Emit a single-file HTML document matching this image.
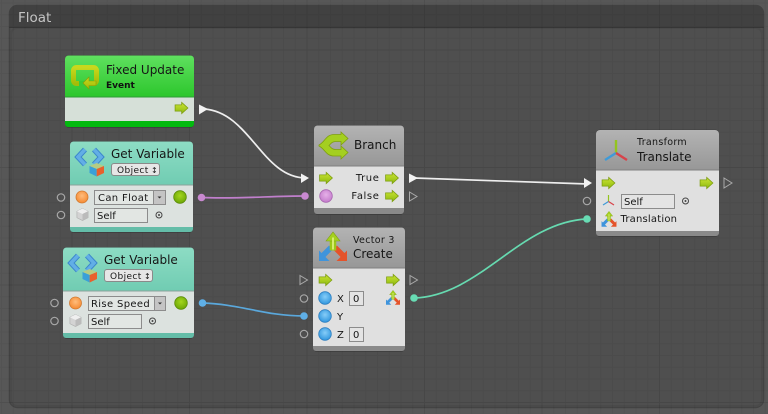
<!DOCTYPE html>
<html><head><meta charset="utf-8"><style>
html,body{margin:0;padding:0;background:#575757;width:768px;height:414px;overflow:hidden}
svg{display:block;filter:blur(.3px)}
text{font-family:"DejaVu Sans","Liberation Sans",sans-serif;fill:#161616}
</style></head><body>
<svg width="768" height="414" viewBox="0 0 768 414" xmlns="http://www.w3.org/2000/svg">
<defs>
<pattern id="g" width="11.75" height="11.75" patternUnits="userSpaceOnUse" x="1" y="2.500"><path d="M.5 0V11.750M0 .5H11.750" stroke="#000" stroke-opacity=".05" fill="none"/></pattern>
<pattern id="G" width="117.5" height="117.5" patternUnits="userSpaceOnUse" x="71.500" y="49.500"><path d="M.5 0V117.500M0 .5H117.500" stroke="#000" stroke-opacity=".05" fill="none"/></pattern>
<linearGradient id="hg" x1="0" y1="0" x2="0" y2="1"><stop offset="0" stop-color="#5fe05f"/><stop offset="1" stop-color="#2cc62c"/></linearGradient>
<linearGradient id="ht" x1="0" y1="0" x2="0" y2="1"><stop offset="0" stop-color="#8ddcc4"/><stop offset="1" stop-color="#70ccb2"/></linearGradient>
<linearGradient id="hs" x1="0" y1="0" x2="0" y2="1"><stop offset="0" stop-color="#b3b3b3"/><stop offset="1" stop-color="#979797"/></linearGradient>
<linearGradient id="ag" x1="0" y1="0" x2="0" y2="1"><stop offset="0" stop-color="#cde636"/><stop offset="1" stop-color="#8cb80e"/></linearGradient>
<linearGradient id="ly" x1="0" y1="0" x2="0" y2="1"><stop offset="0" stop-color="#c8d81c"/><stop offset="1" stop-color="#a4bc08"/></linearGradient>
<radialGradient id="po" cx=".5" cy=".4" r=".6"><stop offset="0" stop-color="#ffbd7c"/><stop offset="1" stop-color="#f58a32"/></radialGradient>
<radialGradient id="pg" cx=".5" cy=".4" r=".6"><stop offset="0" stop-color="#a4d61e"/><stop offset="1" stop-color="#6da706"/></radialGradient>
<radialGradient id="pb" cx=".5" cy=".4" r=".6"><stop offset="0" stop-color="#86cdf8"/><stop offset="1" stop-color="#3096de"/></radialGradient>
<radialGradient id="pp" cx=".5" cy=".4" r=".6"><stop offset="0" stop-color="#e6b0e8"/><stop offset="1" stop-color="#c47ccc"/></radialGradient>
<symbol id="arr" viewBox="0 0 14 12" overflow="visible"><path d="M.6 2.900H7.200V.4L13.400 6 7.200 11.600V9.100H.6Z" fill="url(#ag)" stroke="#7f9f10" stroke-width=".8"/></symbol>
<symbol id="cube" viewBox="0 0 14 14" overflow="visible"><path d="M7 .5 13 3.500V10.500L7 13.500 1 10.500V3.500Z" fill="#d3d3d3" stroke="#aaa" stroke-width=".6"/><path d="M1 3.500 7 6.500 13 3.500 7 .5Z" fill="#efefef"/><path d="M7 6.500V13.500L13 10.500V3.500Z" fill="#bbb"/></symbol>
<symbol id="vec" viewBox="0 0 30 30" overflow="visible">
<path d="M13 16 5 24" stroke="#3f94dc" stroke-width="5.500" fill="none"/><path d="M1 19V29.500H11.500Z" fill="#3f94dc"/>
<path d="M17 16 25 24" stroke="#e5532a" stroke-width="5.500" fill="none"/><path d="M29 19V29.500H18.500Z" fill="#e5532a"/>
<path d="M15 19V7" stroke="#9cc81a" stroke-width="6.500" fill="none"/><path d="M8 9.500 15 .5 22 9.500Z" fill="#a4d020" stroke="#7f9f10" stroke-width=".6"/><path d="M15 6V18" stroke="#d6ec70" stroke-width="2"/>
</symbol>
<symbol id="axes" viewBox="0 0 26 26" overflow="visible"><path d="M13 14V1" stroke="#93c41f" stroke-width="2.400"/><path d="M13 14 2 21" stroke="#3f9bd8" stroke-width="2.400"/><path d="M13 14 24 21" stroke="#d8434a" stroke-width="2.400"/></symbol>
<symbol id="getv" viewBox="0 0 30 30" overflow="visible">
<path d="M10 2.500 3 10 10 17.500" fill="none" stroke="#3b86cc" stroke-width="5.500"/><path d="M10 2.500 3 10 10 17.500" fill="none" stroke="#62aee6" stroke-width="3.500"/>
<path d="M19 2.500 26 10 19 17.500" fill="none" stroke="#3b86cc" stroke-width="5.500"/><path d="M19 2.500 26 10 19 17.500" fill="none" stroke="#62aee6" stroke-width="3.500"/>
<path d="M14.500 19 21.700 16 29 19 21.700 22Z" fill="#b4cc84"/><path d="M14.500 19 21.700 22V29.500L14.500 26Z" fill="#3aa0d8"/><path d="M21.700 22 29 19V26L21.700 29.500Z" fill="#e8602c"/>
</symbol>
</defs>
<rect width="768" height="414" fill="#575757"/>
<rect x="9.500" y="5.500" width="754" height="402" rx="8" fill="#4f4f4f" stroke="#434343" stroke-width="1.500"/>
<rect x="11" y="28" width="751" height="378" rx="6" fill="none" stroke="#4a4a4a" stroke-width="2"/>
<path d="M9 27V13a8 8 0 0 1 8-8H756a8 8 0 0 1 8 8V27Z" fill="#414141"/>
<rect x="9" y="27" width="755" height="1" fill="#363636"/>
<rect width="768" height="414" fill="url(#g)"/>
<rect width="768" height="414" fill="url(#G)"/>
<text x="18" y="22" font-size="13.5" style="fill:#c4c4c4">Float</text>

<!-- wires -->
<path d="M204 109C250 112 262 178 306 178" fill="none" stroke="#eee" stroke-width="1.700"/>
<path d="M201 197.500C240 199 270 196 305 196" fill="none" stroke="#c07fcc" stroke-width="1.700"/>
<path d="M202 303C240 304 265 316 304 316" fill="none" stroke="#5aa8dc" stroke-width="1.700"/>
<path d="M414 298C480 296 520 222 587 219" fill="none" stroke="#66dab0" stroke-width="1.700"/>
<path d="M414 178 588 184" fill="none" stroke="#eee" stroke-width="1.700"/>

<!-- Fixed Update -->
<rect x="65" y="55" width="129" height="73" rx="4" fill="#2a2a2a" opacity=".4"/>
<path d="M65 97V59a3.500 3.500 0 0 1 3.500-3.500H190.500a3.500 3.500 0 0 1 3.500 3.500V97Z" fill="url(#hg)"/>
<rect x="65" y="97" width="129" height="24" fill="#d6e0d8"/><rect x="65" y="96.500" width="129" height="1" fill="#2f9c36"/>
<path d="M65 121H194V124a3 3 0 0 1-3 3H68a3 3 0 0 1-3-3Z" fill="#03b90f"/>
<rect x="73.500" y="67.500" width="23" height="16" rx="3" fill="none" stroke="url(#ly)" stroke-width="5"/>
<rect x="79" y="81" width="10" height="6.500" fill="#38cb38"/>
<path d="M89 77 83 83 89 89V85.500H96V81H89Z" fill="url(#ly)" stroke="#8a9c05" stroke-width=".6"/>
<text x="106" y="74" font-size="12">Fixed Update</text>
<text x="106" y="88" font-size="9" font-weight="bold" style="fill:#111">Event</text>
<use href="#arr" x="174.500" y="102" width="14" height="12"/>
<path d="M199 104.500 208 109 199 114.500Z" fill="#f2f2f2"/>

<!-- Get Variable 1 -->
<rect x="70" y="141" width="123" height="92" rx="4" fill="#2a2a2a" opacity=".4"/>
<path d="M70 185V145a3.500 3.500 0 0 1 3.500-3.500H189.500a3.500 3.500 0 0 1 3.500 3.500V185Z" fill="url(#ht)"/>
<rect x="70" y="185" width="123" height="42" fill="#dce2df"/><rect x="70" y="184.500" width="123" height="1" fill="#8aa39b"/>
<path d="M70 227H193V229a3 3 0 0 1-3 3H73a3 3 0 0 1-3-3Z" fill="#64bda8"/>
<use href="#getv" x="75" y="147" width="30" height="30"/>
<text x="111" y="158" font-size="12">Get Variable</text>
<rect x="111.500" y="163.500" width="48" height="12" rx="2.500" fill="#e6e6e6" stroke="#8a8a8a"/>
<text x="117" y="173" font-size="9" letter-spacing=".4">Object</text><text x="151" y="173" font-size="8">↕</text>
<circle cx="61" cy="197.500" r="3.700" fill="none" stroke="#a8a8a8" stroke-width="1.200"/>
<circle cx="61" cy="215" r="3.700" fill="none" stroke="#a8a8a8" stroke-width="1.200"/>
<circle cx="82" cy="197" r="6" fill="url(#po)" stroke="#d07a30" stroke-width=".8"/>
<rect x="94.500" y="190.500" width="71" height="14" fill="#e2e6e3" stroke="#8c8c8c"/>
<rect x="153.500" y="190.500" width="12" height="14" fill="#c4c4c4" stroke="#8c8c8c"/><path d="M157.500 196.500H161.500L159.500 198.500Z" fill="#333"/>
<text x="98" y="201" font-size="10" letter-spacing=".35">Can Float</text>
<circle cx="180" cy="197" r="6.300" fill="url(#pg)" stroke="#5b8c08" stroke-width=".8"/>
<circle cx="201.500" cy="197.500" r="3.800" fill="#c889d0"/>
<use href="#cube" x="76" y="208" width="13" height="13"/>
<rect x="94.500" y="208.500" width="53" height="14" fill="#e2e6e3" stroke="#8c8c8c"/>
<text x="97" y="219" font-size="10">Self</text>
<circle cx="159" cy="215" r="3" fill="none" stroke="#444"/><circle cx="159" cy="215" r="1" fill="#444"/>

<!-- Get Variable 2 -->
<rect x="63" y="247" width="131" height="92" rx="4" fill="#2a2a2a" opacity=".4"/>
<path d="M63 291V251a3.500 3.500 0 0 1 3.500-3.500H190.500a3.500 3.500 0 0 1 3.500 3.500V291Z" fill="url(#ht)"/>
<rect x="63" y="291" width="131" height="42" fill="#dce2df"/><rect x="63" y="290.500" width="131" height="1" fill="#8aa39b"/>
<path d="M63 333H194V335a3 3 0 0 1-3 3H66a3 3 0 0 1-3-3Z" fill="#64bda8"/>
<use href="#getv" x="68" y="253" width="30" height="30"/>
<text x="104" y="264" font-size="12">Get Variable</text>
<rect x="104.500" y="269.500" width="48" height="12" rx="2.500" fill="#e6e6e6" stroke="#8a8a8a"/>
<text x="110" y="279" font-size="9" letter-spacing=".4">Object</text><text x="144" y="279" font-size="8">↕</text>
<circle cx="54.500" cy="303" r="3.700" fill="none" stroke="#a8a8a8" stroke-width="1.200"/>
<circle cx="54.500" cy="321" r="3.700" fill="none" stroke="#a8a8a8" stroke-width="1.200"/>
<circle cx="75.500" cy="303" r="6" fill="url(#po)" stroke="#d07a30" stroke-width=".8"/>
<rect x="88.500" y="296.500" width="77" height="14" fill="#e2e6e3" stroke="#8c8c8c"/>
<rect x="154.500" y="296.500" width="11" height="14" fill="#c4c4c4" stroke="#8c8c8c"/><path d="M158 302.500H162L160 304.500Z" fill="#333"/>
<text x="91" y="307" font-size="10" letter-spacing=".35">Rise Speed</text>
<circle cx="181" cy="303" r="6.300" fill="url(#pg)" stroke="#5b8c08" stroke-width=".8"/>
<circle cx="202.500" cy="303" r="3.800" fill="#5fafe6"/>
<use href="#cube" x="69" y="314" width="13" height="13"/>
<rect x="88.500" y="314.500" width="53" height="14" fill="#e2e6e3" stroke="#8c8c8c"/>
<text x="91" y="325" font-size="10">Self</text>
<circle cx="152.500" cy="321" r="3" fill="none" stroke="#444"/><circle cx="152.500" cy="321" r="1" fill="#444"/>

<!-- Branch -->
<rect x="314" y="125" width="90" height="90" rx="4" fill="#2a2a2a" opacity=".4"/>
<path d="M314 166V129a3.500 3.500 0 0 1 3.500-3.500H400.500a3.500 3.500 0 0 1 3.500 3.500V166Z" fill="url(#hs)"/>
<rect x="314" y="166" width="90" height="42" fill="#e0e0e0"/><rect x="314" y="165.500" width="90" height="1" fill="#808080"/>
<path d="M314 208H404V211a3 3 0 0 1-3 3H317a3 3 0 0 1-3-3Z" fill="#8a8a8a"/>
<path d="M319 145C325 142 326 134.500 334 134.500H341V132L348 138.500 341 145V141.500H336C332 141.500 331 143.500 329 145.500 331 147.500 332 149.500 336 149.500H341V146L348 152.500 341 159V156H334C326 156 325 149 319 146Z" fill="#a4cf20" stroke="#7f9f10" stroke-width=".8"/>
<text x="354" y="149" font-size="12">Branch</text>
<path d="M301 173.500 309 178 301 183Z" fill="#f2f2f2"/>
<circle cx="305" cy="196" r="3.800" fill="#c889d0"/>
<use href="#arr" x="319" y="172" width="14" height="12"/>
<text x="379.500" y="181" font-size="10" text-anchor="end" letter-spacing=".6">True</text>
<use href="#arr" x="385" y="172" width="14" height="12"/>
<circle cx="326" cy="196" r="6.300" fill="url(#pp)" stroke="#a867b0" stroke-width=".8"/>
<text x="379.500" y="199" font-size="10" text-anchor="end" letter-spacing=".6">False</text>
<use href="#arr" x="385" y="190" width="14" height="12"/>
<path d="M409 173.500 418 178 409 183Z" fill="#f2f2f2"/>
<path d="M409.500 192 417 196.500 409.500 201Z" fill="none" stroke="#aaa"/>

<!-- Vector3 -->
<rect x="313" y="227" width="92" height="125" rx="4" fill="#2a2a2a" opacity=".4"/>
<path d="M313 268V231a3.500 3.500 0 0 1 3.500-3.500H401.500a3.500 3.500 0 0 1 3.500 3.500V268Z" fill="url(#hs)"/>
<rect x="313" y="268" width="92" height="78" fill="#e0e0e0"/><rect x="313" y="267.500" width="92" height="1" fill="#808080"/>
<path d="M313 346H405V348a3 3 0 0 1-3 3H316a3 3 0 0 1-3-3Z" fill="#8a8a8a"/>
<use href="#vec" x="318" y="231" width="30" height="31"/>
<text x="353" y="243" font-size="9.500" letter-spacing=".3">Vector 3</text>
<text x="353" y="258" font-size="12">Create</text>
<path d="M300 275.500 307.500 280 300 284.500Z" fill="none" stroke="#aaa"/>
<circle cx="304" cy="298.500" r="3.700" fill="none" stroke="#a8a8a8" stroke-width="1.200"/>
<circle cx="304" cy="316" r="3.800" fill="#5fafe6"/>
<circle cx="304" cy="334" r="3.700" fill="none" stroke="#a8a8a8" stroke-width="1.200"/>
<use href="#arr" x="318.500" y="274" width="14" height="12"/>
<use href="#arr" x="386" y="274" width="14" height="12"/>
<circle cx="325" cy="298" r="6.300" fill="url(#pb)" stroke="#2f7fc0" stroke-width=".8"/>
<circle cx="325" cy="316" r="6.300" fill="url(#pb)" stroke="#2f7fc0" stroke-width=".8"/>
<circle cx="325" cy="334" r="6.300" fill="url(#pb)" stroke="#2f7fc0" stroke-width=".8"/>
<text x="337" y="302" font-size="10">X</text>
<text x="337" y="320" font-size="10">Y</text>
<text x="337" y="338" font-size="10">Z</text>
<rect x="349.500" y="291.500" width="14" height="14" fill="#e4e4e4" stroke="#8c8c8c"/><text x="353" y="302" font-size="10">0</text>
<rect x="349.500" y="327.500" width="14" height="14" fill="#e4e4e4" stroke="#8c8c8c"/><text x="353" y="338" font-size="10">0</text>
<use href="#vec" x="385" y="290" width="16" height="15"/>
<path d="M410 275.500 417.500 280 410 284.500Z" fill="none" stroke="#aaa"/>
<circle cx="414" cy="298" r="3.800" fill="#68dcb4"/>

<!-- Translate -->
<rect x="596" y="129.500" width="123" height="107.500" rx="4" fill="#2a2a2a" opacity=".4"/>
<path d="M596 170V134a4 4 0 0 1 4-4H715a4 4 0 0 1 4 4V170Z" fill="url(#hs)"/>
<rect x="596" y="170" width="123" height="61" fill="#e0e0e0"/><rect x="596" y="169.500" width="123" height="1" fill="#808080"/>
<path d="M596 231H719V233a3 3 0 0 1-3 3H599a3 3 0 0 1-3-3Z" fill="#8a8a8a"/>
<use href="#axes" x="603" y="139" width="26" height="26"/>
<text x="637" y="145" font-size="9.500" letter-spacing=".3">Transform</text>
<text x="637" y="161" font-size="12">Translate</text>
<path d="M584 178 592 183 584 188Z" fill="#f2f2f2"/>
<circle cx="587" cy="201" r="3.700" fill="none" stroke="#a8a8a8" stroke-width="1.200"/>
<circle cx="587" cy="219" r="3.800" fill="#68dcb4"/>
<use href="#arr" x="601.500" y="177" width="14" height="12"/>
<use href="#arr" x="699.500" y="177" width="14" height="12"/>
<use href="#axes" x="602" y="194" width="13" height="14"/>
<rect x="621.500" y="194.500" width="53" height="14" fill="#e4e4e4" stroke="#8c8c8c"/>
<text x="624" y="205" font-size="10">Self</text>
<circle cx="685.500" cy="201" r="3" fill="none" stroke="#444"/><circle cx="685.500" cy="201" r="1" fill="#444"/>
<use href="#vec" x="601" y="211" width="16" height="16"/>
<text x="620.500" y="222" font-size="10" letter-spacing=".2">Translation</text>
<path d="M724 178 732 183 724 188Z" fill="none" stroke="#aaa"/>
</svg>
</body></html>
